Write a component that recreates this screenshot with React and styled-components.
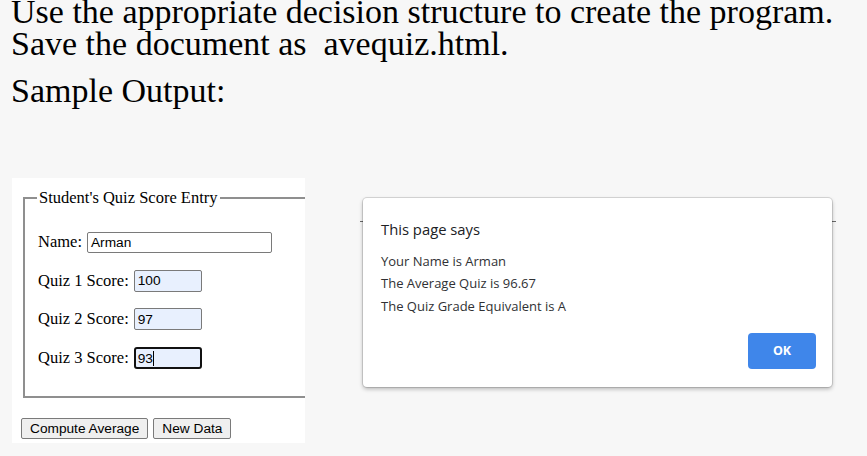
import React from "react";
import styled, { createGlobalStyle } from "styled-components";

const Global = createGlobalStyle`
  html, body { margin: 0; padding: 0; }
  body {
    background: #f7f7f7;
    width: 867px;
    height: 456px;
    overflow: hidden;
  }
`;

const Page = styled.div`
  width: 867px;
  height: 456px;
  overflow: hidden;
`;

const Intro = styled.div`
  margin-top: -4.5px;
  padding-left: 11px;
  font-family: "Liberation Serif", "Times New Roman", serif;
  font-size: 34px;
  line-height: 32px;
  color: #000;
`;

const Line = styled.div`
  white-space: nowrap;
`;

const Heading = styled.div`
  margin-top: ${(p) => p.$gap || 0}px;
`;

const Stage = styled.div`
  display: flex;
  align-items: flex-start;
  margin-top: 71.5px;
  padding-left: 12px;
`;

const Shot = styled.div`
  width: 293px;
  height: 265px;
  box-sizing: border-box;
  background: #ffffff;
  padding: 11px 0 5px 9px;
  overflow: hidden;
  font-family: "Liberation Serif", "Times New Roman", serif;
  font-size: 16.5px;
  color: #000;
`;

const Fieldset = styled.fieldset`
  width: 300px;
  margin: 0 2px;
  padding: 23.6px 0 27px 13px;
  border: 2px solid #8f8f8f;
  box-sizing: border-box;
`;

const Legend = styled.legend`
  padding: 0 2px;
  margin-left: -1px;
  line-height: 18.4px;
`;

const Rows = styled.div`
  display: flex;
  flex-direction: column;
  gap: 16.7px;
`;

const Row = styled.div`
  display: flex;
  align-items: center;
  height: 22px;
  white-space: nowrap;
`;

const Label = styled.span`
  margin-right: 5px;
`;

const Field = styled.span`
  position: relative;
  display: inline-flex;
  align-items: center;
  box-sizing: border-box;
  width: ${(p) => p.$w}px;
  height: ${(p) => p.$h}px;
  padding-left: ${(p) => (p.$focus ? 2 : 3)}px;
  background: ${(p) => (p.$filled ? "#e8f0fe" : "#ffffff")};
  border: ${(p) => (p.$focus ? "2px solid #111" : "1px solid #7a7a7a")};
  border-radius: ${(p) => (p.$focus ? 3 : 2)}px;
  font-family: "Liberation Sans", Arial, sans-serif;
  font-size: 13.7px;
  color: #000;
`;

const Caret = styled.span`
  display: inline-block;
  width: 1px;
  height: 15px;
  background: #000;
  margin-left: 0.5px;
`;

const Buttons = styled.div`
  display: flex;
  gap: 5px;
  margin-top: 20px;
`;

const Btn = styled.button`
  height: 21px;
  padding: 0 ${(p) => p.$pad}px;
  background: #efefef;
  border: 1px solid #7a7a7a;
  border-radius: 2px;
  font-family: "Liberation Sans", Arial, sans-serif;
  font-size: 13.7px;
  color: #000;
  line-height: 19px;
`;

const DialogWrap = styled.div`
  position: relative;
  margin-left: 58px;
  margin-top: 20px;
  &::before {
    content: "";
    position: absolute;
    top: 23px;
    left: -3px;
    right: -4px;
    height: 1px;
    background: #6a6a6a;
  }
`;

const Dialog = styled.div`
  position: relative;
  z-index: 1;
  width: 469px;
  height: 189px;
  box-sizing: border-box;
  padding: 21.3px 16px 18px 18px;
  background: #ffffff;
  border-radius: 4px;
  box-shadow: 0 0 0 1px rgba(0, 0, 0, 0.12), 0 2px 4px rgba(0, 0, 0, 0.28);
  font-family: "Open Sans", "Noto Sans", sans-serif;
  display: flex;
  flex-direction: column;
`;

const Title = styled.div`
  font-size: 14.8px;
  line-height: 20px;
  color: #202124;
`;

const Message = styled.div`
  margin-top: 10.4px;
  font-size: 13px;
  line-height: 22.5px;
  color: #303134;
`;

const Footer = styled.div`
  display: flex;
  justify-content: flex-end;
  margin-top: 15.8px;
`;

const OkButton = styled.button`
  width: 68px;
  height: 36px;
  border: none;
  border-radius: 4px;
  background: #3f86ea;
  color: #ffffff;
  font-family: "Open Sans", "Noto Sans", sans-serif;
  font-weight: 700;
  font-size: 12.5px;
  padding: 0;
`;

export default function App() {
  return (
    <Page>
      <Global />
      <Intro>
        <Line>Use the appropriate decision structure to create the program.</Line>
        <Line>Save the document as{"\u00a0"} avequiz.html.</Line>
        <Heading $gap={15}>Sample Output:</Heading>
      </Intro>
      <Stage>
        <Shot>
          <Fieldset>
            <Legend>Student's Quiz Score Entry</Legend>
            <Rows>
              <Row>
                <Label>Name:</Label>
                <Field $w={185} $h={21}>Arman</Field>
              </Row>
              <Row>
                <Label>Quiz 1 Score:</Label>
                <Field $w={68} $h={22} $filled>100</Field>
              </Row>
              <Row>
                <Label>Quiz 2 Score:</Label>
                <Field $w={68} $h={22} $filled>97</Field>
              </Row>
              <Row>
                <Label>Quiz 3 Score:</Label>
                <Field $w={68} $h={22} $filled $focus>
                  93<Caret />
                </Field>
              </Row>
            </Rows>
          </Fieldset>
          <Buttons>
            <Btn $pad={8}>Compute Average</Btn>
            <Btn $pad={8}>New Data</Btn>
          </Buttons>
        </Shot>
        <DialogWrap>
          <Dialog>
            <Title>This page says</Title>
            <Message>
              <div>Your Name is Arman</div>
              <div>The Average Quiz is 96.67</div>
              <div>The Quiz Grade Equivalent is A</div>
            </Message>
            <Footer>
              <OkButton>OK</OkButton>
            </Footer>
          </Dialog>
        </DialogWrap>
      </Stage>
    </Page>
  );
}
